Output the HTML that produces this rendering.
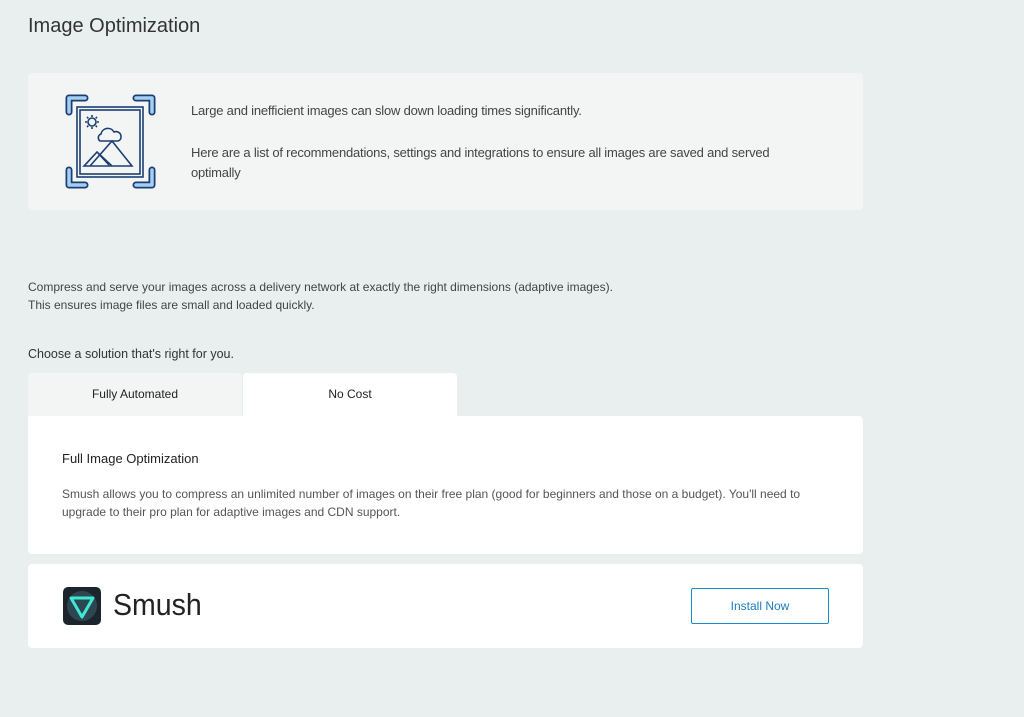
<!DOCTYPE html>
<html><head><style>
body{margin:0;background:#e9eeee;font-family:"Liberation Sans",Arial,sans-serif;color:#333;width:1024px;height:717px;overflow:hidden;position:relative}
.a{position:absolute}
h1{position:absolute;left:28px;top:15px;margin:0;font-size:20px;font-weight:normal;color:#333}
.card1{left:28px;top:73px;width:835px;height:137px;background:#f3f5f5;border-radius:4px}
.t{font-size:13px;color:#444}
.tab{top:373px;height:43px;width:214px;font-size:12px;text-align:center;line-height:43px;color:#222;border-radius:4px 4px 0 0}
.w{background:#fff;border-radius:4px}
.btn{left:691px;top:588px;width:136px;height:34px;border:1px solid #1a8ad0;border-radius:2px;color:#1a7bbf;font-size:12px;text-align:center;line-height:34px;background:#fff}
</style></head><body>
<h1>Image Optimization</h1>
<div class="a card1"></div>
<svg class="a" style="left:60px;top:90px" width="100" height="102" viewBox="60 90 100 102">
<g fill="none" stroke-linecap="round" stroke-linejoin="round">
<path d="M69 112V98h16M136 98h16v14M69 170v15h16M136 185h16V170" stroke="#1b3f73" stroke-width="7"/>
<path d="M69 112V98h16M136 98h16v14M69 170v15h16M136 185h16V170" stroke="#a6cff5" stroke-width="3.5"/>
</g>
<g fill="none" stroke="#1b3f73" stroke-width="1.6">
<rect x="77" y="107" width="66" height="70"/><rect x="80" y="110" width="60" height="64"/>
<circle cx="92" cy="122" r="4"/><path d="M92 115v2M92 127v2M85 122h2M97 122h2M87 117l1.3 1.3M95.7 125.7l1.3 1.3M87 127l1.3-1.3M95.7 118.3l1.3-1.3"/>
<path d="M100 141a4 4 0 0 1 1-7 7 7 0 0 1 13-2 5 5 0 0 1 7 5 4 4 0 0 1-3 4z"/>
<path d="M84 166l13-14 15 14zM90 166l22-25 20 25zM86 164l11-12 12 13"/></g></svg>
<div class="a t" style="left:191px;top:103px;letter-spacing:-0.2px">Large and inefficient images can slow down loading times significantly.</div>
<div class="a t" style="left:191px;top:143px;width:630px;line-height:20px;letter-spacing:-0.2px">Here are a list of recommendations, settings and integrations to ensure all images are saved and served optimally</div>
<div class="a" style="left:28px;top:278px;font-size:12px;line-height:18px;color:#444">Compress and serve your images across a delivery network at exactly the right dimensions (adaptive images).<br>This ensures image files are small and loaded quickly.</div>
<div class="a" style="left:28px;top:347px;font-size:12.5px;color:#333">Choose a solution that's right for you.</div>
<div class="a tab" style="left:28px;background:#f3f5f5">Fully Automated</div>
<div class="a tab" style="left:243px;background:#fff">No Cost</div>
<div class="a" style="left:28px;top:416px;width:835px;height:138px;background:#fff;border-radius:0 4px 4px 4px"></div>
<div class="a" style="left:62px;top:451px;font-size:13px;color:#222">Full Image Optimization</div>
<div class="a" style="left:62px;top:485px;width:775px;font-size:12px;line-height:18px;color:#555">Smush allows you to compress an unlimited number of images on their free plan (good for beginners and those on a budget). You'll need to upgrade to their pro plan for adaptive images and CDN support.</div>
<div class="a w" style="left:28px;top:564px;width:835px;height:84px"></div>
<svg class="a" style="left:63px;top:587px" width="38" height="38" viewBox="0 0 38 38"><rect width="38" height="38" rx="5" fill="#1d252c"/><circle cx="19" cy="19" r="15" fill="#2d4650"/><path d="M8 11h22L19 30z" fill="none" stroke="#3ee8d6" stroke-width="3" stroke-linejoin="round"/></svg>
<div class="a" style="left:113px;top:587px;font-size:31px;color:#222;transform:scaleX(0.92);transform-origin:left">Smush</div>
<div class="a btn">Install Now</div>
</body></html>
